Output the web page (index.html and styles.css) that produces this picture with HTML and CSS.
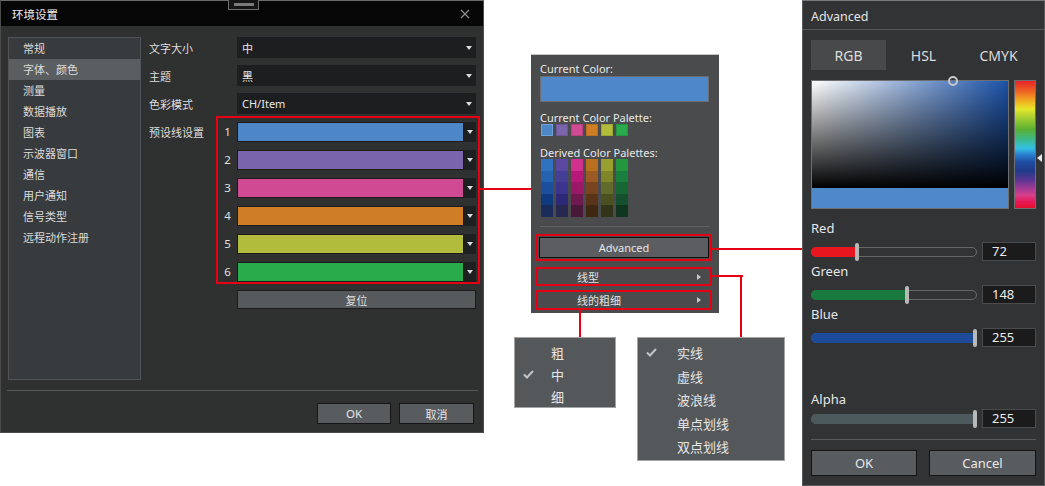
FILE: index.html
```html
<!DOCTYPE html>
<html lang="zh">
<head>
<meta charset="utf-8">
<title>环境设置</title>
<link rel="stylesheet" href="styles.css">
</head>
<body>
<div class="canvas">

  <!-- Left dialog -->
  <section class="win env">
    <header class="env-title">
      <span>环境设置</span>
      <svg class="close" width="10" height="10" viewBox="0 0 10 10"><path d="M1 1L9 9M9 1L1 9" stroke="#8a8a8a" stroke-width="1.3"/></svg>
    </header>
    <div class="env-main">
      <ul class="side">
        <li>常规</li>
        <li class="sel">字体、颜色</li>
        <li>测量</li>
        <li>数据播放</li>
        <li>图表</li>
        <li>示波器窗口</li>
        <li>通信</li>
        <li>用户通知</li>
        <li>信号类型</li>
        <li>远程动作注册</li>
      </ul>
      <div class="form">
        <div class="frow"><span class="lbl">文字大小</span><div class="select"><span>中</span><i class="tri"></i></div></div>
        <div class="frow"><span class="lbl">主题</span><div class="select"><span>黑</span><i class="tri"></i></div></div>
        <div class="frow frow-last"><span class="lbl">色彩模式</span><div class="select"><span class="latin">CH/Item</span><i class="tri"></i></div></div>
        <div class="preset">
          <span class="lbl plbl">预设线设置</span>
          <div class="hlbox">
            <div class="crow"><span class="num">1</span><span class="bar c1"></span><span class="drop"><i class="tri"></i></span></div>
            <div class="crow"><span class="num">2</span><span class="bar c2"></span><span class="drop"><i class="tri"></i></span></div>
            <div class="crow"><span class="num">3</span><span class="bar c3"></span><span class="drop"><i class="tri"></i></span></div>
            <div class="crow"><span class="num">4</span><span class="bar c4"></span><span class="drop"><i class="tri"></i></span></div>
            <div class="crow"><span class="num">5</span><span class="bar c5"></span><span class="drop"><i class="tri"></i></span></div>
            <div class="crow"><span class="num">6</span><span class="bar c6"></span><span class="drop"><i class="tri"></i></span></div>
          </div>
        </div>
        <button class="reset">复位</button>
      </div>
    </div>
    <div class="env-sep"></div>
    <footer class="env-foot">
      <button class="btn btn-ok">OK</button>
      <button class="btn btn-cancel">取消</button>
    </footer>
    <div class="grab"><i></i></div>
  </section>

  <!-- Color palette popup -->
  <section class="win palette">
    <div class="plabel">Current Color:</div>
    <div class="curcolor"></div>
    <div class="plabel plabel2">Current Color Palette:</div>
    <div class="swatches">
      <span class="sw c1 sw-sel"></span><span class="sw c2"></span><span class="sw c3"></span><span class="sw c4"></span><span class="sw c5"></span><span class="sw c6"></span>
    </div>
    <div class="plabel plabel3">Derived Color Palettes:</div>
    <div class="derived">
      <div class="dcol"><i class="d11"></i><i class="d12"></i><i class="d13"></i><i class="d14"></i><i class="d15"></i></div>
      <div class="dcol"><i class="d21"></i><i class="d22"></i><i class="d23"></i><i class="d24"></i><i class="d25"></i></div>
      <div class="dcol"><i class="d31"></i><i class="d32"></i><i class="d33"></i><i class="d34"></i><i class="d35"></i></div>
      <div class="dcol"><i class="d41"></i><i class="d42"></i><i class="d43"></i><i class="d44"></i><i class="d45"></i></div>
      <div class="dcol"><i class="d51"></i><i class="d52"></i><i class="d53"></i><i class="d54"></i><i class="d55"></i></div>
      <div class="dcol"><i class="d61"></i><i class="d62"></i><i class="d63"></i><i class="d64"></i><i class="d65"></i></div>
    </div>
    <div class="psep"></div>
    <div class="redwrap adv-wrap"><button class="adv">Advanced</button></div>
    <div class="redwrap mrow mrow1"><span>线型</span><i class="rtri"></i></div>
    <div class="redwrap mrow mrow2"><span>线的粗细</span><i class="rtri"></i></div>
  </section>

  <!-- Thickness menu -->
  <ul class="win menu menu-w">
    <li><span class="chk"></span>粗</li>
    <li><span class="chk"><svg width="11" height="9" viewBox="0 0 11 9"><path d="M1 4.5L4 7.5L10 1" fill="none" stroke="#c4c4c4" stroke-width="2"/></svg></span>中</li>
    <li><span class="chk"></span>细</li>
  </ul>

  <!-- Line type menu -->
  <ul class="win menu menu-t">
    <li><span class="chk"><svg width="11" height="9" viewBox="0 0 11 9"><path d="M1 4.5L4 7.5L10 1" fill="none" stroke="#c4c4c4" stroke-width="2"/></svg></span>实线</li>
    <li><span class="chk"></span>虚线</li>
    <li><span class="chk"></span>波浪线</li>
    <li><span class="chk"></span>单点划线</li>
    <li><span class="chk"></span>双点划线</li>
  </ul>

  <!-- Advanced dialog -->
  <section class="win advdlg">
    <header class="adv-title">Advanced</header>
    <div class="adv-body">
      <div class="tabs">
        <span class="tab on">RGB</span>
        <span class="tab">HSL</span>
        <span class="tab">CMYK</span>
      </div>
      <div class="picker">
        <div class="sv">
          <div class="sv-grad"><span class="sv-ring"></span></div>
          <div class="sv-cur"></div>
        </div>
        <div class="hue"><span class="hue-mark"></span></div>
      </div>
      <div class="slab">Red</div>
      <div class="srow">
        <div class="track"><span class="fill f-red"></span><span class="knob k-red"></span></div>
        <span class="val">72</span>
      </div>
      <div class="slab">Green</div>
      <div class="srow">
        <div class="track"><span class="fill f-green"></span><span class="knob k-green"></span></div>
        <span class="val">148</span>
      </div>
      <div class="slab">Blue</div>
      <div class="srow">
        <div class="track"><span class="fill f-blue"></span><span class="knob k-full"></span></div>
        <span class="val">255</span>
      </div>
      <div class="slab slab-alpha">Alpha</div>
      <div class="srow srow-alpha">
        <div class="track"><span class="fill f-alpha"></span><span class="knob k-full"></span></div>
        <span class="val">255</span>
      </div>
      <div class="adv-sep"></div>
      <div class="adv-btns">
        <button class="abtn">OK</button>
        <button class="abtn">Cancel</button>
      </div>
    </div>
  </section>

  <!-- Connector wires -->
  <i class="wire w-pal"></i>
  <i class="wire w-adv"></i>
  <i class="wire w-type-h"></i>
  <i class="wire w-type-v"></i>
  <i class="wire w-width-v"></i>
</div>
</body>
</html>
```

FILE: styles.css
```css
* { box-sizing: border-box; }
html, body { margin: 0; padding: 0; background: #fff; }
body {
  font-family: "Noto Sans", "Noto Sans CJK SC", sans-serif;
  color: #e2e2e2;
}
ul { list-style: none; margin: 0; padding: 0; }
button { font: inherit; color: inherit; padding: 0; cursor: default; }

.canvas { position: relative; width: 1045px; height: 486px; overflow: hidden; }
.win { position: absolute; }

/* ---------- left dialog ---------- */
.env {
  left: 0; top: 0; width: 484px; height: 433px;
  background: #2f3030;
  border: 1px solid #4b4b4b;
  border-top-color: #6a6a6a;
  display: flex; flex-direction: column;
  font-family: "Noto Sans CJK SC", sans-serif;
  font-size: 11px;
}
.env-title {
  height: 25px; flex: none;
  background: #060606;
  display: flex; align-items: center; justify-content: space-between;
  padding: 0 12px 0 11px;
  font-size: 11.5px; color: #f0f0f0;
}
.close { margin-right: 1px; }
.grab {
  position: absolute; left: 227px; top: -1px; width: 31px; height: 10px;
  border: 1px solid #6e6e6e; border-top: none;
  background: #151515;
  display: flex; justify-content: center; padding-top: 3px;
}
.grab i { display: block; width: 20px; height: 3px; background: #7a7a7a; }

.env-main {
  height: 364px; flex: none;
  display: grid; grid-template-columns: 133px 1fr; column-gap: 8px;
  padding: 11px 0 0 7px;
}
.side {
  height: 343px;
  background: #383b3e;
  border: 1px solid #505458;
  padding-top: 0;
  color: #dcdcdc;
}
.side li { height: 21px; line-height: 21px; padding-left: 14px; }
.side li.sel { background: #5b5e61; }

.form { display: flex; flex-direction: column; }
.frow { display: flex; height: 21px; margin-bottom: 7px; align-items: center; }
.frow-last { margin-bottom: 2px; }
.lbl { width: 88px; flex: none; color: #dedede; }
.select {
  width: 239px; height: 21px;
  background: #1d1e1f;
  display: flex; align-items: center; justify-content: space-between;
  padding: 0 4px 0 5px;
  color: #e6e6e6;
}
.latin { font-family: "Noto Sans", sans-serif; font-size: 11px; }
.tri {
  display: block; width: 0; height: 0;
  border-left: 3.5px solid transparent; border-right: 3.5px solid transparent;
  border-top: 4px solid #dcdcdc;
}

.preset { display: flex; align-items: flex-start; margin-bottom: 6px; }
.plbl { width: 67px; padding-top: 6px; line-height: 20px; }
.hlbox {
  width: 264px;
  border: 2px solid #e50012;
  padding: 4px 2px 0 0;
  display: flex; flex-direction: column; gap: 8px;
}
.crow { display: flex; height: 20px; align-items: stretch; }
.num {
  width: 19px; text-align: center; line-height: 20px;
  font-family: "Noto Sans", sans-serif; font-size: 11.5px; color: #e0e0e0;
}
.bar { width: 227px; border: 1px solid #1b1b1b; }
.drop {
  width: 12px; background: #1e1f20;
  display: flex; align-items: center; justify-content: center;
}
.c1 { background: #4e87c7; }
.c2 { background: #7a64ab; }
.c3 { background: #cf4a93; }
.c4 { background: #d07e26; }
.c5 { background: #b1bc3c; }
.c6 { background: #29aa4b; }

.reset {
  margin-left: 88px; width: 239px; height: 19px;
  background: #575a5c; border: 1px solid #1c1c1c;
  font-size: 11px; color: #dedede; line-height: 16px;
  font-family: "Noto Sans CJK SC", sans-serif;
}

.env-sep { height: 0; border-top: 1px solid #585858; margin: 0 5px 0 6px; }
.env-foot {
  display: flex; justify-content: flex-end; gap: 8px;
  padding: 12px 9px 0 0;
}
.btn {
  height: 21px; background: #595c5f; border: 1px solid #161616;
  font-size: 11px; color: #e6e6e6;
}
.btn-ok { width: 74px; font-family: "Noto Sans", sans-serif; font-size: 11.5px; }
.btn-cancel { width: 75px; font-family: "Noto Sans CJK SC", sans-serif; }

/* ---------- palette popup ---------- */
.palette {
  left: 531px; top: 54px; width: 188px; height: 259px;
  background: #4a4b4d;
  border-top: 1px solid #c8c8c8;
  padding: 8px 10px 0 9px;
  display: flex; flex-direction: column;
  font-size: 11px;
}
.plabel { line-height: 12px; height: 12px; color: #e8e8e8; white-space: nowrap; }
.plabel2 { margin-top: 10px; }
.plabel3 { margin-top: 11px; }
.curcolor {
  margin-top: 1px; height: 26px;
  background: #4f88c8; border: 1px solid #6c6d70;
}
.swatches { display: flex; gap: 3px; height: 12px; padding-left: 1px; }
.sw { width: 12px; height: 12px; border: 1px solid rgba(0,0,0,0.12); }
.sw-sel { border-color: #6fa2dc; }
.derived { display: flex; gap: 3px; height: 58px; padding-left: 1px; }
.dcol { width: 12px; display: grid; grid-template-rows: repeat(5, 1fr); }
.dcol i { display: block; }
.d11 { background: #2f72be; } .d12 { background: #2563b0; } .d13 { background: #1b4f9e; } .d14 { background: #103a80; } .d15 { background: #1a2d5a; }
.d21 { background: #5a48a0; } .d22 { background: #443e96; } .d23 { background: #3b3590; } .d24 { background: #2e2878; } .d25 { background: #272850; }
.d31 { background: #d0308e; } .d32 { background: #b81878; } .d33 { background: #9a1866; } .d34 { background: #701850; } .d35 { background: #4a1838; }
.d41 { background: #b8701e; } .d42 { background: #9a5a22; } .d43 { background: #784420; } .d44 { background: #5a3418; } .d45 { background: #3e2812; }
.d51 { background: #9aa030; } .d52 { background: #7e8628; } .d53 { background: #626a2c; } .d54 { background: #4a5020; } .d55 { background: #323418; }
.d61 { background: #23963e; } .d62 { background: #1a7e3e; } .d63 { background: #186634; } .d64 { background: #14502e; } .d65 { background: #103620; }

.psep { margin-top: 9px; height: 1px; background: #5e6063; }
.redwrap { border: 2px solid #e50012; margin: 0 -3px 0 -4px; }
.adv-wrap { margin-top: 7px; padding: 1px; }
.adv {
  display: block; width: 100%; height: 21px;
  background: #5b5d60; border: 1px solid #0f0f0f;
  font-size: 11px; color: #e6e6e6;
}
.mrow {
  height: 19px; display: flex; align-items: center; justify-content: space-between;
  padding: 0 9px 0 39px;
  font-family: "Noto Sans CJK SC", sans-serif; font-size: 11px; color: #e2e2e2;
}
.mrow1 { margin-top: 6px; }
.mrow2 { margin-top: 4px; height: 20px; }
.rtri {
  display: block; width: 0; height: 0;
  border-top: 3.5px solid transparent; border-bottom: 3.5px solid transparent;
  border-left: 4px solid #c8c8c8;
}

/* ---------- menus ---------- */
.menu {
  top: 337px;
  background: #55585b;
  border: 1px solid #a4a4a4;
  padding-top: 3px;
  font-family: "Noto Sans CJK SC", sans-serif; font-size: 13px; color: #e6e6e6;
}
.menu-w { left: 514px; width: 102px; height: 71px; }
.menu-w li { height: 22px; display: flex; align-items: center; }
.menu-w .chk { width: 36px; padding-left: 8px; }
.menu-t { left: 637px; width: 148px; height: 124px; }
.menu-t li { height: 23.5px; display: flex; align-items: center; }
.menu-t .chk { width: 39px; padding-left: 8px; }
.chk { display: flex; align-items: center; flex: none; height: 100%; }

/* ---------- advanced dialog ---------- */
.advdlg {
  left: 802px; top: 0; width: 243px; height: 486px;
  background: #323335;
  border: 1px solid #5a5b5d;
  border-top-color: #7a7a7a;
  display: flex; flex-direction: column;
}
.adv-title {
  height: 29px; flex: none;
  border-bottom: 1px solid #58595b;
  padding: 3px 0 0 8px;
  display: flex; align-items: center;
  font-size: 12.5px; color: #e4e4e4;
}
.adv-body { padding: 10px 8px 0 8px; display: flex; flex-direction: column; }
.tabs { display: grid; grid-template-columns: 75px 75px 75px; height: 30px; }
.tab {
  display: flex; align-items: center; justify-content: center;
  font-size: 14px; color: #dcdcdc;
}
.tab.on { background: #47494b; }

.picker {
  margin-top: 10px; height: 129px;
  display: grid; grid-template-columns: 198px 22px; column-gap: 5px;
}
.sv { border: 1px solid #6e6f71; display: flex; flex-direction: column; }
.sv-grad {
  position: relative; height: 107px;
  background:
    linear-gradient(to top, #000 0%, rgba(0,0,0,0) 100%),
    linear-gradient(to right, #ffffff 0%, #1b52a8 100%);
}
.sv-cur { flex: 1; background: #4f89c9; }
.sv-ring {
  position: absolute; left: 136px; top: -5px;
  width: 10px; height: 10px; border-radius: 50%;
  border: 2px solid #c8c8c8;
}
.hue {
  position: relative;
  border: 1px solid #6e6f71;
  background: linear-gradient(to bottom,
    #e8232a 0%, #ee6a22 9%, #f0b020 16%, #e6e62a 22%, #9ccc30 30%, #5cb032 38%,
    #3cba8a 46%, #34bfe4 53%, #2a7fd0 58%, #1e4ca0 64%, #223a8a 71%, #5a3592 78%,
    #9c3a96 84%, #d6408a 90%, #e8185a 95%, #e5102c 100%);
}
.hue-mark {
  position: absolute; right: -7px; top: 73px;
  width: 0; height: 0;
  border-top: 4px solid transparent; border-bottom: 4px solid transparent;
  border-right: 5px solid #e8e8e8;
}

.slab { margin-top: 2px; line-height: 16px; height: 16px; font-size: 13px; color: #e6e6e6; }
.picker + .slab { margin-top: 11px; }
.slab-alpha { margin-top: 44px; }
.srow {
  margin-top: 6px; height: 19px;
  display: flex; align-items: center; gap: 5px;
}
.srow-alpha { margin-top: 2px; }
.track {
  position: relative; width: 166px; height: 10px;
  border: 1px solid #67686a; border-radius: 5px;
  display: flex;
}
.fill { display: block; margin: -1px 0 -1px -1px; border-radius: 5px 0 0 5px; }
.f-red { width: 47px; background: #e8161f; }
.f-green { width: 97px; background: #187a3d; }
.f-blue { width: 166px; background: #1e4a9a; border-radius: 5px; }
.f-alpha { width: 166px; background: #4d5a5d; border-radius: 5px; }
.knob {
  position: absolute; top: -5px; width: 4px; height: 18px;
  background: #b8b8b8; border-radius: 2px;
}
.k-red { left: 43px; }
.k-green { left: 93px; }
.k-full { left: 161px; }
.val {
  width: 54px; height: 19px;
  background: #1b1b1b; border: 1px solid #4a4b4d;
  padding-left: 9px; line-height: 17px;
  font-size: 13px; color: #ececec;
}
.adv-sep { margin-top: 11px; height: 1px; background: #5a5b5d; }
.adv-btns { margin-top: 10px; display: grid; grid-template-columns: 106px 107px; column-gap: 12px; }
.abtn {
  height: 26px; background: #595c5f; border: 1px solid #141414;
  font-size: 13px; color: #e8e8e8;
}

/* ---------- connector wires ---------- */
.wire { position: absolute; display: block; background: #e50012; }
.w-pal { left: 480px; top: 188px; width: 51px; height: 2px; }
.w-adv { left: 712px; top: 248px; width: 90px; height: 2px; }
.w-type-h { left: 712px; top: 275px; width: 31px; height: 2px; }
.w-type-v { left: 740px; top: 275px; width: 2px; height: 62px; }
.w-width-v { left: 579px; top: 309px; width: 2px; height: 28px; }
```
